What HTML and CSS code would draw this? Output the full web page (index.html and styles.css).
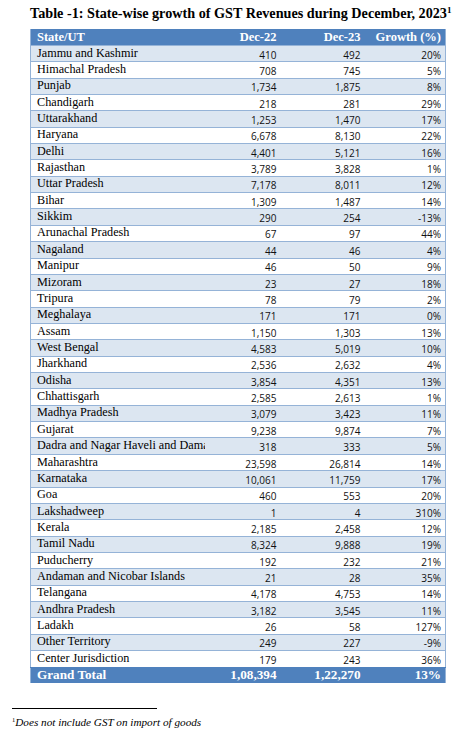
FILE: index.html
```html
<!DOCTYPE html>
<html>
<head>
<meta charset="utf-8">
<link rel="stylesheet" href="styles.css">
</head>
<body>
<div class="page">
  <h1 class="title">Table -1: State-wise growth of GST Revenues during December, 2023<sup>1</sup></h1>
  <table class="gst">
    <colgroup>
      <col class="c-name"><col class="c-n1"><col class="c-n2"><col class="c-g">
    </colgroup>
    <thead>
      <tr><th class="name">State/UT</th><th>Dec-22</th><th>Dec-23</th><th>Growth (%)</th></tr>
    </thead>
    <tbody>
      <tr><td class="name">Jammu and Kashmir</td><td>410</td><td>492</td><td>20%</td></tr>
      <tr><td class="name">Himachal Pradesh</td><td>708</td><td>745</td><td>5%</td></tr>
      <tr><td class="name">Punjab</td><td>1,734</td><td>1,875</td><td>8%</td></tr>
      <tr><td class="name">Chandigarh</td><td>218</td><td>281</td><td>29%</td></tr>
      <tr><td class="name">Uttarakhand</td><td>1,253</td><td>1,470</td><td>17%</td></tr>
      <tr><td class="name">Haryana</td><td>6,678</td><td>8,130</td><td>22%</td></tr>
      <tr><td class="name">Delhi</td><td>4,401</td><td>5,121</td><td>16%</td></tr>
      <tr><td class="name">Rajasthan</td><td>3,789</td><td>3,828</td><td>1%</td></tr>
      <tr><td class="name">Uttar Pradesh</td><td>7,178</td><td>8,011</td><td>12%</td></tr>
      <tr><td class="name">Bihar</td><td>1,309</td><td>1,487</td><td>14%</td></tr>
      <tr><td class="name">Sikkim</td><td>290</td><td>254</td><td>-13%</td></tr>
      <tr><td class="name">Arunachal Pradesh</td><td>67</td><td>97</td><td>44%</td></tr>
      <tr><td class="name">Nagaland</td><td>44</td><td>46</td><td>4%</td></tr>
      <tr><td class="name">Manipur</td><td>46</td><td>50</td><td>9%</td></tr>
      <tr><td class="name">Mizoram</td><td>23</td><td>27</td><td>18%</td></tr>
      <tr><td class="name">Tripura</td><td>78</td><td>79</td><td>2%</td></tr>
      <tr><td class="name">Meghalaya</td><td>171</td><td>171</td><td>0%</td></tr>
      <tr><td class="name">Assam</td><td>1,150</td><td>1,303</td><td>13%</td></tr>
      <tr><td class="name">West Bengal</td><td>4,583</td><td>5,019</td><td>10%</td></tr>
      <tr><td class="name">Jharkhand</td><td>2,536</td><td>2,632</td><td>4%</td></tr>
      <tr><td class="name">Odisha</td><td>3,854</td><td>4,351</td><td>13%</td></tr>
      <tr><td class="name">Chhattisgarh</td><td>2,585</td><td>2,613</td><td>1%</td></tr>
      <tr><td class="name">Madhya Pradesh</td><td>3,079</td><td>3,423</td><td>11%</td></tr>
      <tr><td class="name">Gujarat</td><td>9,238</td><td>9,874</td><td>7%</td></tr>
      <tr><td class="name">Dadra and Nagar Haveli and Daman and Diu</td><td>318</td><td>333</td><td>5%</td></tr>
      <tr><td class="name">Maharashtra</td><td>23,598</td><td>26,814</td><td>14%</td></tr>
      <tr><td class="name">Karnataka</td><td>10,061</td><td>11,759</td><td>17%</td></tr>
      <tr><td class="name">Goa</td><td>460</td><td>553</td><td>20%</td></tr>
      <tr><td class="name">Lakshadweep</td><td>1</td><td>4</td><td>310%</td></tr>
      <tr><td class="name">Kerala</td><td>2,185</td><td>2,458</td><td>12%</td></tr>
      <tr><td class="name">Tamil Nadu</td><td>8,324</td><td>9,888</td><td>19%</td></tr>
      <tr><td class="name">Puducherry</td><td>192</td><td>232</td><td>21%</td></tr>
      <tr><td class="name">Andaman and Nicobar Islands</td><td>21</td><td>28</td><td>35%</td></tr>
      <tr><td class="name">Telangana</td><td>4,178</td><td>4,753</td><td>14%</td></tr>
      <tr><td class="name">Andhra Pradesh</td><td>3,182</td><td>3,545</td><td>11%</td></tr>
      <tr><td class="name">Ladakh</td><td>26</td><td>58</td><td>127%</td></tr>
      <tr><td class="name">Other Territory</td><td>249</td><td>227</td><td>-9%</td></tr>
      <tr><td class="name">Center Jurisdiction</td><td>179</td><td>243</td><td>36%</td></tr>
    </tbody>
    <tfoot>
      <tr><td class="name">Grand Total</td><td>1,08,394</td><td>1,22,270</td><td>13%</td></tr>
    </tfoot>
  </table>
  <div class="footnote">
    <div class="rule"></div>
    <p class="note"><sup>1</sup>Does not include GST on import of goods</p>
  </div>
</div>
</body>
</html>
```

FILE: styles.css
```css
html, body {
  margin: 0;
  padding: 0;
  background: #ffffff;
}

.page {
  width: 462px;
  height: 730px;
  overflow: hidden;
  font-family: "Liberation Serif", "Times New Roman", serif;
  color: #000;
}

.title {
  margin: 0;
  padding: 5px 0 0 30px;
  height: 29px;
  box-sizing: border-box;
  font-size: 14.2px;
  font-weight: bold;
  line-height: 16px;
  white-space: nowrap;
}

.title sup {
  font-size: 9px;
  line-height: 0;
  vertical-align: 5px;
}

.gst {
  margin: 0 0 0 30px;
  width: 415px;
  border-collapse: collapse;
  table-layout: fixed;
  border-left: 1px solid #95b3d7;
  border-right: 1px solid #95b3d7;
}

.c-name { width: 174px; }
.c-n1 { width: 76px; }
.c-n2 { width: 84px; }
.c-g { width: 81px; }

.gst tr {
  height: 16.36px;
}

.gst th,
.gst td {
  padding: 0 4px 0 6px;
  text-align: right;
  white-space: nowrap;
  overflow: hidden;
  vertical-align: middle;
}

.gst thead th {
  background: #4f81bd;
  color: #ffffff;
  font-weight: bold;
  font-size: 12.5px;
  line-height: 14px;
  padding-top: 1px;
}

.gst tbody td {
  font-family: "Open Sans", "Liberation Sans", sans-serif;
  font-size: 10px;
  line-height: 12px;
  color: #111;
  border-top: 1px solid #95b3d7;
  padding-top: 2px;
}

.gst tbody tr:nth-child(odd) td {
  background: #dce6f1;
}

.gst tbody td.name {
  font-family: "Liberation Serif", "Times New Roman", serif;
  font-size: 12.2px;
  line-height: 13px;
  padding-top: 0;
  padding-bottom: 1px;
  color: #000;
}

.gst .name {
  text-align: left;
}

.gst tfoot td {
  background: #4f81bd;
  color: #ffffff;
  font-weight: bold;
  font-size: 13.2px;
  line-height: 14px;
  border-top: 1px solid #4f81bd;
}

.footnote {
  padding: 25px 0 0 12px;
}

.rule {
  width: 145px;
  border-top: 1px solid #000;
}

.note {
  margin: 7px 0 0;
  font-style: italic;
  font-size: 11.2px;
  line-height: 13px;
}

.note sup {
  font-style: normal;
  font-size: 6.5px;
  line-height: 0;
  vertical-align: 4px;
}
```
